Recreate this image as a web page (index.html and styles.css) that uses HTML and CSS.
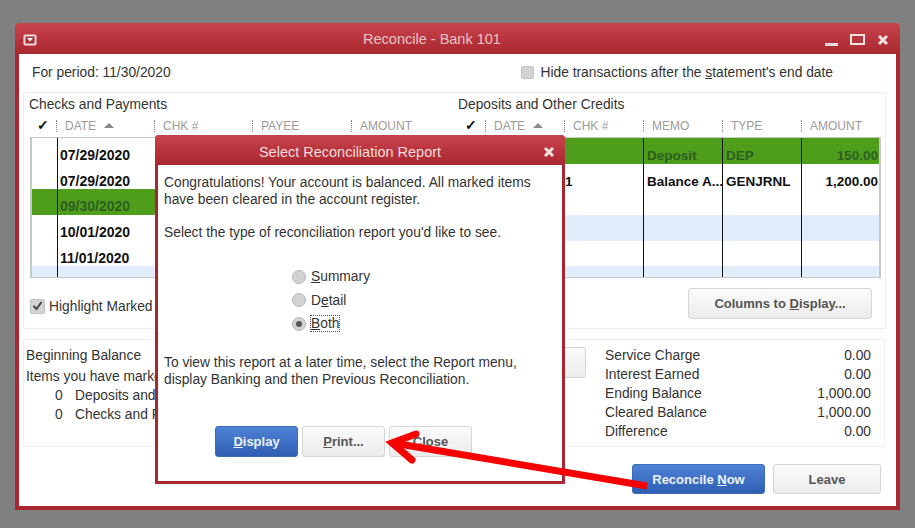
FILE: index.html
```html
<!DOCTYPE html>
<html lang="en">
<head>
<meta charset="utf-8">
<title>Reconcile - Bank 101</title>
<link rel="stylesheet" href="styles.css">
</head>
<body>
<div class="window">
  <div class="titlebar">
    <svg class="sysmenu" width="14" height="12" viewBox="0 0 14 12"><rect x="1" y="1" width="12" height="10" rx="1" fill="#e9c9cc" stroke="#f4e4e5"/><rect x="2.500" y="2.500" width="9" height="7" fill="#a8323a"/><path d="M4 4h6L7 7.500z" fill="#fff"/></svg>
    <span class="wintitle">Reconcile - Bank 101</span>
    <span class="winbtns">
      <svg width="13" height="14" viewBox="0 0 13 14"><rect x="0" y="10" width="13" height="3" fill="#ecd9da"/></svg>
      <svg width="15" height="14" viewBox="0 0 15 14"><rect x="1" y="2" width="13" height="9" fill="none" stroke="#f1e2e3" stroke-width="2"/></svg>
      <svg width="12" height="14" viewBox="0 0 12 14"><path d="M2 3l8 8M10 3l-8 8" stroke="#f1e2e3" stroke-width="3"/></svg>
    </span>
  </div>
  <div class="winbody">
    <div class="periodrow">
      <span>For period: 11/30/2020</span>
      <label class="hide"><span class="check"></span><span>Hide transactions after the <u>s</u>tatement's end date</span></label>
    </div>
    <section class="panel">
      <div class="panes">
        <div class="pane pane-left">
          <h2>Checks and Payments</h2>
          <div class="heads">
            <span class="tick">✓</span><span class="head">DATE <i class="sort"></i></span><span class="head">CHK #</span><span class="head">PAYEE</span><span class="head">AMOUNT</span>
          </div>
          <div class="rows">
            <div class="row"><span></span><span class="cell">07/29/2020</span></div>
            <div class="row"><span></span><span class="cell">07/29/2020</span></div>
            <div class="row green"><span></span><span class="cell">09/30/2020</span></div>
            <div class="row"><span></span><span class="cell">10/01/2020</span></div>
            <div class="row"><span></span><span class="cell">11/01/2020</span></div>
            <div class="row blue short"><span></span><span class="cell"></span></div>
          </div>
        </div>
        <div class="pane pane-right">
          <h2>Deposits and Other Credits</h2>
          <div class="heads">
            <span class="tick">✓</span><span class="head">DATE <i class="sort"></i></span><span class="head">CHK #</span><span class="head">MEMO</span><span class="head">TYPE</span><span class="head">AMOUNT</span>
          </div>
          <div class="rows">
            <div class="row green"><span class="cell"></span><span class="cell"></span><span class="cell">Deposit</span><span class="cell">DEP</span><span class="cell num">150.00</span></div>
            <div class="row"><span class="cell"></span><span class="cell plain">1</span><span class="cell">Balance A...</span><span class="cell">GENJRNL</span><span class="cell num">1,200.00</span></div>
            <div class="row"><span class="cell"></span><span class="cell plain"></span><span class="cell"></span><span class="cell"></span><span class="cell"></span></div>
            <div class="row blue"><span class="cell"></span><span class="cell plain"></span><span class="cell"></span><span class="cell"></span><span class="cell"></span></div>
            <div class="row"><span class="cell"></span><span class="cell plain"></span><span class="cell"></span><span class="cell"></span><span class="cell"></span></div>
            <div class="row blue short"><span class="cell"></span><span class="cell plain"></span><span class="cell"></span><span class="cell"></span><span class="cell"></span></div>
          </div>
        </div>
      </div>
      <div class="panelfoot">
        <label class="highlight"><span class="check checked"><svg width="11" height="10" viewBox="0 0 11 10"><path d="M1.500 5l3 3 5-7" fill="none" stroke="#444" stroke-width="2"/></svg></span><span>Highlight Marked</span></label>
        <button class="btn btn-columns" type="button">Columns to <u>D</u>isplay...</button>
      </div>
    </section>
    <section class="summary">
      <div class="sumleft">
        <div class="begin">Beginning Balance</div>
        <div>Items you have marked cleared</div>
        <div class="item"><span class="cnt">0</span>Deposits and Other Credits</div>
        <div class="item"><span class="cnt">0</span>Checks and Payments</div>
      </div>
      <button class="btn btn-modify" type="button"></button>
      <dl class="sumright">
        <div><dt>Service Charge</dt><dd>0.00</dd></div>
        <div><dt>Interest Earned</dt><dd>0.00</dd></div>
        <div><dt>Ending Balance</dt><dd>1,000.00</dd></div>
        <div><dt>Cleared Balance</dt><dd>1,000.00</dd></div>
        <div><dt>Difference</dt><dd>0.00</dd></div>
      </dl>
    </section>
    <div class="footer">
      <button class="btn primary btn-now" type="button">Reconcile <u>N</u>ow</button>
      <button class="btn btn-leave" type="button">Leave</button>
    </div>
  </div>
</div>

<div class="dialog">
  <div class="dlgtitle">
    <span>Select Reconciliation Report</span>
    <svg class="dlgclose" width="12" height="12" viewBox="0 0 12 12"><path d="M2 2l8 8M10 2l-8 8" stroke="#f1e2e3" stroke-width="3"/></svg>
  </div>
  <div class="dlgbody">
    <p>Congratulations! Your account is balanced. All marked items<br>have been cleared in the account register.</p>
    <p class="sel">Select the type of reconciliation report you'd like to see.</p>
    <div class="radios">
      <label class="radio"><span class="dot"></span><span><u>S</u>ummary</span></label>
      <label class="radio"><span class="dot"></span><span>D<u>e</u>tail</span></label>
      <label class="radio"><span class="dot on"></span><span class="focus"><u>B</u>oth</span></label>
    </div>
    <p class="later">To view this report at a later time, select the Report menu,<br>display Banking and then Previous Reconciliation.</p>
    <div class="dlgbtns">
      <button class="btn primary dlgbtn" type="button"><u>D</u>isplay</button>
      <button class="btn dlgbtn" type="button"><u>P</u>rint...</button>
      <button class="btn dlgbtn" type="button"><u>C</u>lose</button>
    </div>
  </div>
</div>

<svg class="arrow" width="915" height="528" viewBox="0 0 915 528">
  <path d="M647 486L393 443" fill="none" stroke="#f70000" stroke-width="7"/>
  <path d="M416 434L392 443L412 460" fill="none" stroke="#f70000" stroke-width="7" stroke-linecap="round" stroke-linejoin="miter"/>
</svg>
</body>
</html>
```

FILE: styles.css
```css
* { box-sizing: border-box; }
html, body { margin: 0; height: 528px; overflow: hidden; }
body {
  background: #808080;
  padding: 23px 0 0 15px;
  font: 13.8px/17px "Liberation Sans", Arial, sans-serif;
  color: #333;
  position: relative;
}
u { text-decoration: underline; }
p { margin: 0; }

.window { width: 885px; height: 487px; display: flex; flex-direction: column; }
.titlebar {
  height: 31px;
  background: linear-gradient(#c9434c, #a9272f);
  border-radius: 4px 4px 0 0;
  display: flex;
  align-items: center;
  padding: 2px 11px 0 8px;
  position: relative;
  color: #e9c3c6;
}
.sysmenu { flex: none; }
.wintitle { position: absolute; left: 0; right: 0; text-align: center; font-size: 14.5px; padding-right: 51px; }
.winbtns { margin-left: auto; display: flex; gap: 12px; align-items: center; }

.winbody {
  flex: 1;
  background: #fff;
  border: solid #a9272f;
  border-width: 0 4px 4px;
  padding: 0 10px 0 4px;
  display: flex;
  flex-direction: column;
}
.periodrow { height: 38px; display: flex; align-items: center; padding: 0 53px 2px 9px; justify-content: space-between; }
.hide { display: flex; align-items: center; gap: 6px; padding-top: 1px; }
.check { width: 13px; height: 13px; background: #d3d3d6; border: 1px solid #c2c2c6; border-radius: 2px; display: block; }
.checked { width: 15px; height: 15px; display: flex; align-items: center; justify-content: center; }

.panel { height: 237px; border: 1px solid #eeeeee; width: 863px; padding: 0 4px 0 6px; }
.panes { display: flex; }
.pane h2 { margin: 3px 0 0 -1px; font: inherit; height: 17px; color: #333; }
.pane-left { width: 425px; }
.pane-right { width: 426px; }
.pane-right h2 { margin-left: 3px; }
.heads { height: 24px; display: grid; align-items: center; font-size: 12px; color: #9a9a9a; padding-top: 1px; }
.pane-left .heads { grid-template-columns: 26px 98px 98px 99px 1fr; }
.pane-right .heads { grid-template-columns: 30px 79px 79px 79px 79px 1fr; }
.tick { color: #111; font-size: 14px; font-weight: bold; padding-left: 7px; text-align: left; }
.pane-right .tick { padding-left: 10px; }
.head { border-left: 1px dotted #888; padding-left: 8px; line-height: 12px; white-space: nowrap; }
.sort { display: inline-block; width: 0; height: 0; border: solid transparent; border-width: 0 5px 5px; border-bottom-color: #888; margin: 0 0 2px 5px; }

.rows { height: 141px; border: solid #c8c8c8; border-width: 1px 0 2px; }
.pane-left .rows { border-left-width: 2px; border-left-style: solid; }
.pane-right .rows { border-right-width: 2px; border-right-style: solid; }
.row { height: 25.7px; display: grid; font-weight: bold; color: #111; font-size: 14px; }
.row.short { height: 11px; }
.pane-left .row { grid-template-columns: 25px 1fr; }
.pane-right .row { grid-template-columns: 109px 79px 79px 79px 1fr; font-size: 13.5px; }
.pane-left .cell { border-left: 1px solid #111; padding: 9px 0 0 2px; }
.pane-right .cell { border-left: 1px solid #111; padding: 9px 0 0 3px; white-space: nowrap; overflow: hidden; }
.pane-right .cell:first-child, .pane-right .cell.plain { border-left: 0; }
.pane-right .cell.plain { padding-left: 1px; }
.cell.num { text-align: right; padding-right: 1px; padding-left: 0; }
.green { background: #4f9e1b; color: #2d5e22; }
.blue { background: #e2edfb; }

.panelfoot { display: flex; align-items: center; justify-content: space-between; height: 50px; padding-right: 9px; padding-top: 1px; }
.highlight { display: flex; align-items: center; gap: 4px; margin-top: 5px; }

.btn {
  font: bold 13px "Liberation Sans", Arial, sans-serif;
  color: #555;
  border: 1px solid #d5d5d5;
  border-radius: 3px;
  background: linear-gradient(#fbfbfb, #ececec);
  padding: 0;
}
.btn.primary { color: #eef2fb; background: linear-gradient(#4e82d6, #2f5fb4); border-color: #3c6bb8; }
.btn-columns { width: 184px; height: 31px; }

.summary { height: 108px; width: 862px; margin-top: 10px; border: 1px solid #eeeeee; position: relative; display: flex; padding: 6px 13px 0 2px; }
.sumleft { width: 480px; }
.sumleft > div { height: 19px; line-height: 19px; white-space: nowrap; }
.sumleft .begin { height: 21px; }
.item { padding-left: 29px; }
.cnt { display: inline-block; width: 20px; }
.btn-modify { width: 95px; height: 31px; margin: 1px 0 0 -15px; flex: none; }
.sumright { margin: 0 0 0 19px; flex: 1; }
.sumright div { display: flex; justify-content: space-between; height: 19px; line-height: 19px; }
.sumright dd { margin: 0; }

.footer { display: flex; justify-content: flex-end; gap: 8px; padding: 17px 5px 0 0; }
.btn-now { width: 133px; height: 30px; }
.btn-leave { width: 108px; height: 30px; }

.dialog {
  position: absolute;
  left: 155px;
  top: 135px;
  width: 410px;
  height: 349px;
  border: 3px solid #a9272f;
  border-top: 0;
  border-radius: 4px 4px 0 0;
  background: #fff;
}
.dlgtitle {
  margin: 0 -3px;
  height: 30px;
  background: linear-gradient(#c9434c, #a9272f);
  border-radius: 4px 4px 0 0;
  color: #f2dcdd;
  display: flex;
  align-items: center;
  justify-content: center;
  position: relative;
  padding: 5px 20px 0 0;
  font-size: 14.5px;
}
.dlgclose { position: absolute; right: 10px; top: 11px; }
.dlgbody { padding: 9px 6px 0; }
.sel { margin-top: 16px; }
.radios { margin: 24px 0 0 128px; display: flex; flex-direction: column; }
.radio { display: flex; align-items: center; gap: 5px; height: 23.5px; }
.dot { width: 14px; height: 14px; border-radius: 50%; background: #d2d2d4; border: 1px solid #b8b8ba; position: relative; flex: none; }
.dot.on::after { content: ""; position: absolute; left: 3px; top: 3px; width: 6px; height: 6px; border-radius: 50%; background: #555; }
.focus { outline: 1px dotted #555; line-height: 15px; }
.later { margin-top: 18px; }
.dlgbtns { display: flex; gap: 4px; margin: 38px 0 0 51px; }
.dlgbtn { width: 83px; height: 31px; }

.arrow { position: absolute; left: 0; top: 0; pointer-events: none; }
```
